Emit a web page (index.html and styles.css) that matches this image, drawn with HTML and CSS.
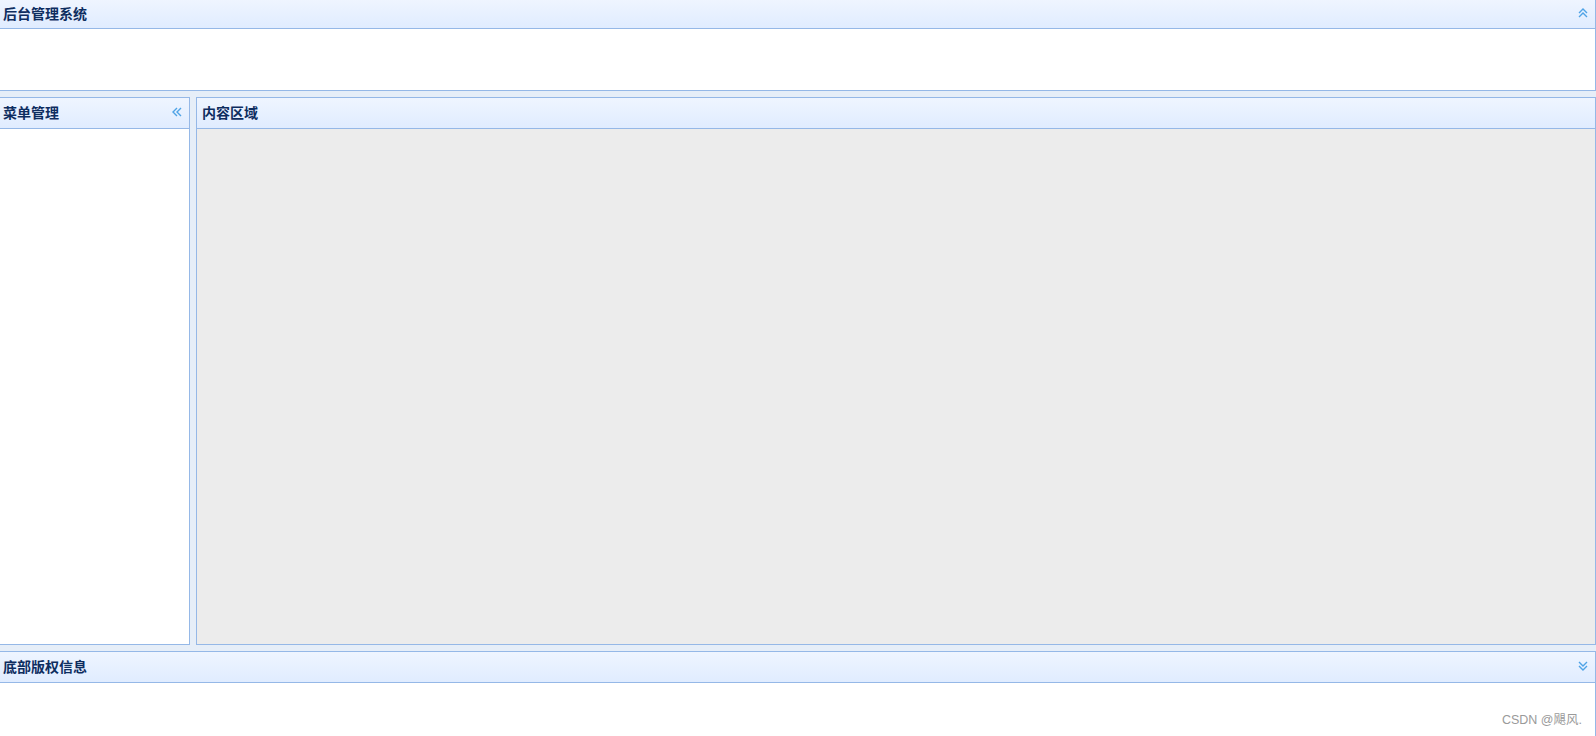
FILE: index.html
```html
<!DOCTYPE html>
<html lang="zh-CN">
<head>
<meta charset="utf-8">
<title>后台管理系统</title>
<link rel="stylesheet" href="styles.css">
</head>
<body>
<div class="layout">
  <section class="panel north">
    <header class="panel-header">
      <span class="panel-title">后台管理系统</span>
      <svg class="tool" width="10" height="10" viewBox="0 0 10 10"><path d="M1 5 L5 1 L9 5 M1 9 L5 5 L9 9" fill="none" stroke="#4FA3E6" stroke-width="1.4"/></svg>
    </header>
    <div class="panel-body"></div>
  </section>
  <section class="panel west">
    <header class="panel-header">
      <span class="panel-title">菜单管理</span>
      <svg class="tool" width="10" height="10" viewBox="0 0 10 10"><path d="M5 1 L1 5 L5 9 M9 1 L5 5 L9 9" fill="none" stroke="#4FA3E6" stroke-width="1.4"/></svg>
    </header>
    <div class="panel-body"></div>
  </section>
  <section class="panel center">
    <header class="panel-header">
      <span class="panel-title">内容区域</span>
    </header>
    <div class="panel-body"></div>
  </section>
  <section class="panel south">
    <header class="panel-header">
      <span class="panel-title">底部版权信息</span>
      <svg class="tool" width="10" height="10" viewBox="0 0 10 10"><path d="M1 1 L5 5 L9 1 M1 5 L5 9 L9 5" fill="none" stroke="#4FA3E6" stroke-width="1.4"/></svg>
    </header>
    <div class="panel-body"></div>
  </section>
</div>
<div class="watermark">CSDN @飓风.</div>
</body>
</html>
```
FILE: styles.css
```css
html, body {
  margin: 0;
  padding: 0;
  overflow: hidden;
  background: #ffffff;
}
body {
  width: 1596px;
  height: 736px;
  position: relative;
  font-family: "Noto Sans CJK SC", "Noto Sans", sans-serif;
}
.layout {
  display: grid;
  grid-template-columns: 193px 1400px;
  grid-template-rows: 93px 548px 87px;
  column-gap: 6px;
  row-gap: 6px;
  width: 1599px;
  height: 740px;
  margin: -2px 0 0 -3px;
  background: #E6EEF8;
}
.panel {
  display: flex;
  flex-direction: column;
  border: 1px solid #95B8E7;
  background: #ffffff;
  min-height: 0;
  box-sizing: border-box;
}
.north, .south {
  grid-column: 1 / -1;
}
.panel-header {
  height: 30px;
  flex: 0 0 30px;
  box-sizing: border-box;
  display: flex;
  align-items: center;
  justify-content: space-between;
  padding: 0 7px 2px 5px;
  border-bottom: 1px solid #95B8E7;
  background: linear-gradient(to bottom, #EFF5FF 0%, #E0ECFF 100%);
}
.west .panel-header,
.center .panel-header,
.south .panel-header {
  height: 31px;
  flex-basis: 31px;
}
.north .panel-header {
  height: 30px;
  flex-basis: 30px;
}
.panel-title {
  font-size: 14px;
  font-weight: bold;
  color: #0E2D5F;
  line-height: 16px;
}
.tool {
  display: block;
}
.panel-body {
  flex: 1;
  background: #ffffff;
}
.center .panel-body {
  background: #ECECEC;
}
.watermark {
  position: absolute;
  right: 14px;
  bottom: 8px;
  font-family: "Liberation Sans", Arial, "Noto Sans CJK SC", sans-serif;
  font-size: 12.5px;
  color: #9a9a9a;
}
```
